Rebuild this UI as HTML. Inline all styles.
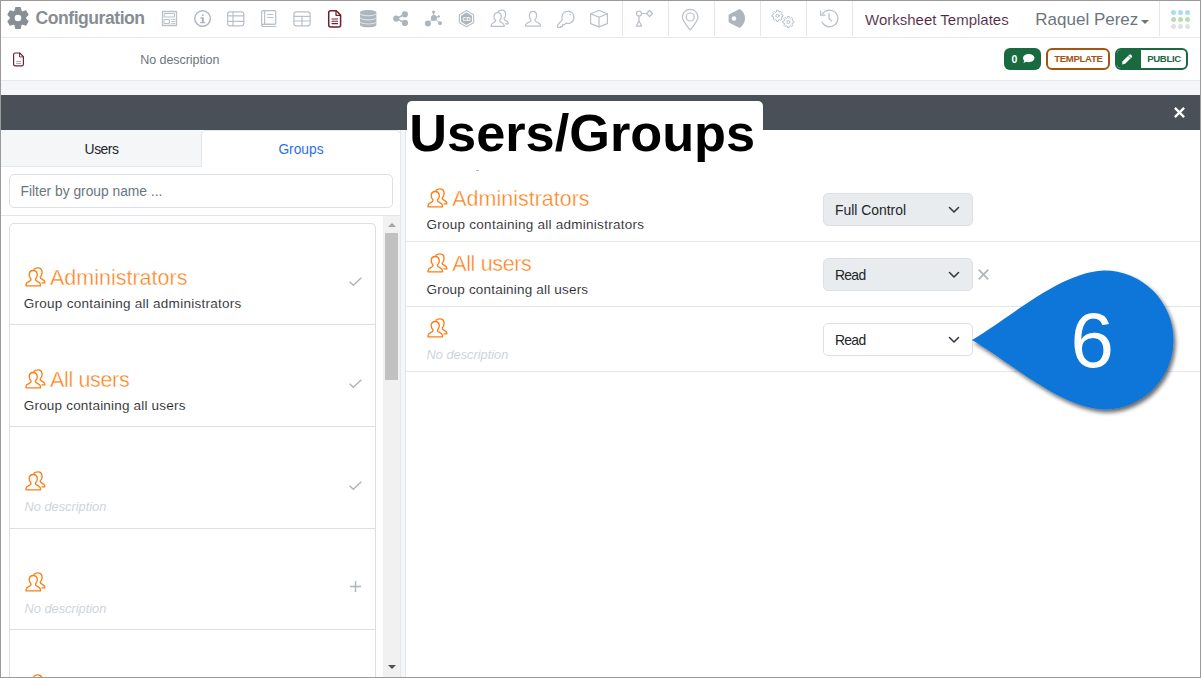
<!DOCTYPE html>
<html>
<head>
<meta charset="utf-8">
<title>Configuration</title>
<style>
*{box-sizing:border-box;margin:0;padding:0}
html,body{width:1201px;height:678px;overflow:hidden;background:#fff}
body{font-family:"Liberation Sans",sans-serif;color:#212529;position:relative}
.abs{position:absolute}
svg{position:absolute;overflow:visible}
#frame{position:absolute;left:0;top:0;width:1201px;height:678px;border:1px solid #9a9a9a;z-index:50;pointer-events:none}
/* top nav */
#nav{position:absolute;left:1px;top:1px;width:1199px;height:37px;background:#fff;border-bottom:1px solid #e6e9ec}
#nav .title{position:absolute;left:34.5px;top:5.6px;font-size:17.6px;font-weight:bold;color:#878d93;letter-spacing:-0.48px;line-height:22px;white-space:nowrap}
.sep{position:absolute;top:0;width:1px;height:35px;background:#e4e7ea}
#nav .ws{position:absolute;left:864px;top:10px;font-size:15px;color:#4d2540;-webkit-text-stroke:0.12px #fff;line-height:18px;white-space:nowrap}
#nav .user{position:absolute;left:1034.3px;top:9.3px;font-size:17px;color:#6c757d;line-height:20px;white-space:nowrap}
#nav .caret{position:absolute;left:1140px;top:19px;width:0;height:0;border-left:4px solid transparent;border-right:4px solid transparent;border-top:4px solid #6c757d}
.dot{position:absolute;width:5px;height:5px;border-radius:50%}
/* sub header */
#sub{position:absolute;left:1px;top:38px;width:1199px;height:43px;background:#fff;border-bottom:1px solid #e6e9ec}
#sub .nd{position:absolute;left:139.2px;top:13.7px;font-size:12.5px;color:#6c757d;line-height:16px;white-space:nowrap;letter-spacing:-0.05px}
#band{position:absolute;left:1px;top:81px;width:1199px;height:14px;background:#f5f6f8}
#bar{position:absolute;left:1px;top:95px;width:1199px;height:35px;background:#495057}
.badge{position:absolute;top:10px;height:22px;border-radius:6px;font-size:9.6px;font-weight:bold;line-height:18px;letter-spacing:-0.35px;white-space:nowrap}
/* left panel */
#gap{position:absolute;left:401px;top:130px;width:4px;height:547px;background:#f5f6f8}
#left{position:absolute;left:1px;top:130px;width:400px;height:547px;background:#fff;border-right:1px solid #e3e6ea}
#tabU{position:absolute;left:0;top:0;width:201px;height:37px;background:#f5f6f8;border-bottom:1px solid #e3e6ea;text-align:center;font-size:13.9px;line-height:38.6px;color:#212529;letter-spacing:-0.5px}
#tabG{position:absolute;left:200px;top:0;width:200px;height:37px;background:#fff;border:1px solid #e3e6ea;border-bottom:none;border-radius:5px 5px 0 0;text-align:center;font-size:13.8px;line-height:38px;color:#2e6fe8}
#filter{position:absolute;left:8px;top:44px;width:384px;height:34px;border:1px solid #dcdfe3;border-radius:5px;font-size:13.8px;color:#6c757d;line-height:34px;padding-left:10.5px;white-space:nowrap}
#hl{position:absolute;left:0;top:85px;width:399px;height:1px;background:#e3e6ea}
#list{position:absolute;left:8px;top:93px;width:367px;height:460px;border:1px solid #dcdfe3;border-radius:5px 5px 0 0;border-bottom:none}
.li{position:absolute;left:0;width:365px;height:102px;border-bottom:1px solid #dcdfe3}
.li .nm{position:absolute;left:40px;top:41.6px;font-size:21.5px;color:#fd7e14;-webkit-text-stroke:0.4px #fff;line-height:26px;white-space:nowrap}
.li .ds{position:absolute;left:13.8px;top:73px;font-size:13.5px;color:#212529;-webkit-text-stroke:0.1px #fff;line-height:16px;white-space:nowrap;letter-spacing:0.26px}
.li .nd{position:absolute;left:14.5px;top:72px;font-size:12.8px;color:#ced4da;font-style:italic;line-height:16px;white-space:nowrap}
#sb{position:absolute;left:382px;top:86px;width:17px;height:461px;background:#f1f1f1}
#sbt{position:absolute;left:384px;top:103px;width:13px;height:147px;background:#c1c1c1}
/* right panel */
#right{position:absolute;left:405px;top:130px;width:795px;height:547px;background:#fff;border-left:1px solid #e3e6ea}
.row{position:absolute;left:0;width:795px;height:65px;border-bottom:1px solid #e3e6ea}
.row .nm{position:absolute;left:46.2px;top:8.6px;font-size:21.5px;color:#fd7e14;-webkit-text-stroke:0.4px #fff;line-height:26px;white-space:nowrap}
.row .ds{position:absolute;left:20.5px;top:40px;font-size:13.5px;color:#212529;-webkit-text-stroke:0.1px #fff;line-height:16px;white-space:nowrap;letter-spacing:0.26px}
.row .nd{position:absolute;left:20.5px;top:40px;font-size:12.8px;color:#ced4da;font-style:italic;line-height:16px;white-space:nowrap}
.sel{position:absolute;left:417px;top:16px;width:150px;height:33px;border:1px solid #dde1e5;border-radius:5px;background:#e9ecef;font-size:13.9px;line-height:32px;padding-left:11px;color:#212529;white-space:nowrap}
.sel.w{background:#fff}
/* title overlay */
#ttl{position:absolute;left:407px;top:101px;width:356px;height:66px;background:#fff;border-radius:5px 5px 0 0;z-index:5}
#ttl span{position:absolute;left:2.3px;top:1.8px;font-size:52.3px;font-weight:bold;color:#000;line-height:60px;white-space:nowrap}
</style>
</head>
<body>
<svg width="0" height="0" style="position:absolute">
  <defs>
    <symbol id="grp" viewBox="0 0 21 21" overflow="visible">
      <g fill="none" stroke="currentColor" stroke-width="1.35" stroke-linejoin="round" stroke-linecap="round">
        <path d="M8.300 3.500c-2.500 0-4.100 1.900-4.100 4.300 0 1.700.7 3 1.700 4v1.100c0 1.500-4.900 1.900-4.900 4.800v1.100h14.500v-1.100c0-2.900-4.900-3.300-4.900-4.800v-1.100c1-1 1.700-2.300 1.700-4 0-2.400-1.500-4.300-4-4.300z"/>
        <path d="M8.900 2.300c.9-.9 2.400-1.500 3.900-1.500 2.700 0 4.300 2.100 4.300 4.700 0 1.700-.7 3.300-1.800 4.300v.9c0 1.200 4 1.800 4.400 4v1.200h-2.700"/>
      </g>
    </symbol>
    <symbol id="chev" viewBox="0 0 10 6" overflow="visible">
      <path d="M0.500 0.500 L5 5 L9.500 0.500" fill="none" stroke="#343a40" stroke-width="1.6" stroke-linecap="round" stroke-linejoin="round"/>
    </symbol>
    <symbol id="chk" viewBox="0 0 13 9" overflow="visible">
      <path d="M0.700 4.800 L4.300 8.200 L12.300 0.700" fill="none" stroke="#adb5bd" stroke-width="1.500"/>
    </symbol>
  </defs>
</svg>

<div id="nav">
  <!-- gear -->
  <svg style="left:5.700px;top:5.900px" width="22" height="22" viewBox="-11 -11 22 22">
    <g fill="#888e93"><circle r="8.300"/><path d="M-3.600 -7.500L-2.700 -10.700Q-2.600 -10.900 -2.300 -10.900H2.300Q2.600 -10.900 2.700 -10.700L3.600 -7.500Z" transform="rotate(0)"/><path d="M-3.600 -7.500L-2.700 -10.700Q-2.600 -10.900 -2.300 -10.900H2.300Q2.600 -10.900 2.700 -10.700L3.600 -7.500Z" transform="rotate(60)"/><path d="M-3.600 -7.500L-2.700 -10.700Q-2.600 -10.900 -2.300 -10.900H2.300Q2.600 -10.900 2.700 -10.700L3.600 -7.500Z" transform="rotate(120)"/><path d="M-3.600 -7.500L-2.700 -10.700Q-2.600 -10.900 -2.300 -10.900H2.300Q2.600 -10.900 2.700 -10.700L3.600 -7.500Z" transform="rotate(180)"/><path d="M-3.600 -7.500L-2.700 -10.700Q-2.600 -10.900 -2.300 -10.900H2.300Q2.600 -10.900 2.700 -10.700L3.600 -7.500Z" transform="rotate(240)"/><path d="M-3.600 -7.500L-2.700 -10.700Q-2.600 -10.900 -2.300 -10.900H2.300Q2.600 -10.900 2.700 -10.700L3.600 -7.500Z" transform="rotate(300)"/></g>
    <circle r="3.300" fill="#fff"/>
  </svg>
  <div class="title">Configuration</div>
  <svg style="left:-1px;top:-1px" width="1201" height="38" viewBox="0 0 1201 38">
  <g fill="none" stroke="#b9c0c8" stroke-width="1.200" stroke-linejoin="round" stroke-linecap="round">
    <!-- 1 newspaper -->
    <rect x="162.500" y="11.500" width="14" height="14" stroke-width="1.300"/>
    <rect x="164.500" y="13.500" width="10" height="3.500" stroke-width="1"/>
    <rect x="164.500" y="19.500" width="5" height="4" stroke-width="1"/>
    <path d="M171.500 19.500h3.500M171.500 21.500h3.500M171.500 23.500h3.500" stroke-width="0.900"/>
    <!-- 2 info -->
    <circle cx="202.600" cy="18.500" r="7.800" stroke-width="1.500" stroke="#b0b8c0"/>
    <!-- 3 table -->
    <rect x="227.600" y="11.800" width="16.200" height="14" rx="2.200"/>
    <path d="M233 11.800v14M227.600 15.900h16.200M227.600 21.400h16.200"/>
    <!-- 4 book -->
    <path d="M263.500 10.600h11.200q1 0 1 1v11.800q0 1 -1 1h-11.200"/>
    <path d="M265 10.600h-1.800q-1.600 0 -1.600 1.600v12.400q0 1.900 1.900 1.900h12.400"/>
    <path d="M264.600 10.600v13.800"/>
    <path d="M261.700 25q0 -0.700 1.700 -0.600h11"/>
    <path d="M267.500 14.500h5.500M267.500 17.500h5.500" stroke-width="1"/>
    <!-- 5 table2 -->
    <rect x="293.900" y="11.800" width="16.200" height="14" rx="2.200"/>
    <path d="M293.900 16.300h16.200M293.900 21h16.200M302 16.300v9.500"/>
    <!-- 11 users -->
    <!-- 12 user -->
    <path d="M533 11.300c-2.200 0-3.600 1.800-3.600 4.200 0 1.700.6 3.100 1.500 4v1.200c0 1.400-5.300 1.800-5.300 4.500v1h14.800v-1c0-2.700-5.300-3.100-5.300-4.500v-1.200c.9-.9 1.500-2.300 1.500-4 0-2.400-1.400-4.200-3.600-4.200z"/>
    <!-- 13 key -->
    <path d="M562.300 19.600a6.100 6.100 0 1 1 3.700 3.500l-1.800 1.800h-1.900v1.700h-1.900v.9h-2.800v-2.400z"/>
    <circle cx="570.300" cy="14.700" r="0.700" fill="#b9c0c8" stroke="none"/>
    <!-- 14 cube -->
    <path d="M599 10.500l8.400 3.300v9.800l-8.400 3.300-8.400-3.300v-9.800z"/>
    <path d="M590.600 13.800l8.400 3.400 8.400-3.400M599 17.200v9.700"/>
    <!-- 15 shapes -->
    <circle cx="639" cy="13.500" r="2.500"/>
    <path d="M641.500 13.500h5M646.500 13.500l3-3 3 3-3 3zM639 16v4.500M639 20.500l2.600 5.700h-5.200z"/>
    <!-- 16 pin -->
    <path d="M690.200 30c-3-4.200-7.800-9-7.800-12.800a7.800 7.800 0 0 1 15.600 0c0 3.800-4.800 8.600-7.800 12.800z"/>
    <circle cx="690.200" cy="17" r="4"/>
    <!-- 18 gears -->
    <g stroke-width="1"><path d="M776.50 11.62 L776.62 10.27 L778.38 10.27 L778.50 11.62 L779.75 12.13 L780.79 11.27 L782.03 12.51 L781.17 13.55 L781.68 14.80 L783.03 14.92 L783.03 16.68 L781.68 16.80 L781.17 18.05 L782.03 19.09 L780.79 20.33 L779.75 19.47 L778.50 19.98 L778.38 21.33 L776.62 21.33 L776.50 19.98 L775.25 19.47 L774.21 20.33 L772.97 19.09 L773.83 18.05 L773.32 16.80 L771.97 16.68 L771.97 14.92 L773.32 14.80 L773.83 13.55 L772.97 12.51 L774.21 11.27 L775.25 12.13Z"/><circle cx="777.5" cy="15.8" r="1.5"/><path d="M787.30 17.82 L787.42 16.47 L789.18 16.47 L789.30 17.82 L790.55 18.33 L791.59 17.47 L792.83 18.71 L791.97 19.75 L792.48 21.00 L793.83 21.12 L793.83 22.88 L792.48 23.00 L791.97 24.25 L792.83 25.29 L791.59 26.53 L790.55 25.67 L789.30 26.18 L789.18 27.53 L787.42 27.53 L787.30 26.18 L786.05 25.67 L785.01 26.53 L783.77 25.29 L784.63 24.25 L784.12 23.00 L782.77 22.88 L782.77 21.12 L784.12 21.00 L784.63 19.75 L783.77 18.71 L785.01 17.47 L786.05 18.33Z"/><circle cx="788.3" cy="22" r="1.5"/></g>
    <!-- 19 history -->
    <path d="M822.500 13.800a8.400 8.400 0 1 1 -.6 8.300"/>
    <path d="M820.600 10.800v4.400h4.400"/>
    <path d="M829 13.500v5l2.800 2.400"/>
    <!-- 10 hex -->
    <path d="M466.500 10.600l7.100 4.050v8.100l-7.100 4.050-7.100-4.050v-8.100z" stroke-width="1.200"/>
  </g>
  <svg x="490.200" y="9.400" width="19" height="19" style="color:#b9c0c8" overflow="visible"><use href="#grp"/></svg>
  <!-- info i -->
  <path d="M201.900 14.400h1.700v1.700h-1.700zM200.500 17.300h3.300v4.600h1.300v1.400h-5V21.900h1.700v-3.200h-1.300z" fill="#aab2bb"/>
  <!-- hex CD inner -->
  <path d="M466.500 13l4.900 2.850v5.700l-4.900 2.850-4.900-2.850v-5.700z" fill="#adb5bd" stroke="#adb5bd" stroke-width="1" stroke-linejoin="round"/>
  <text x="466.500" y="20.800" font-family="Liberation Sans, sans-serif" font-weight="bold" font-size="5.800" fill="#fff" text-anchor="middle" letter-spacing="-0.2">CD</text>
  <!-- 6 doc dark red -->
  <g fill="none" stroke="#6e1f2c" stroke-width="1.500" stroke-linejoin="round" stroke-linecap="round">
    <path d="M330.700 10.800h5.600l4.300 4.300v9.900q0 2-2 2h-7.900q-2 0-2-2v-12.200q0-2 2-2z"/>
    <path d="M336 11v4.300h4.300" stroke-width="1.200"/>
    <path d="M332 19h5.600M332 21.300h5.600M332 23.600h5.600" stroke-width="1.100"/>
  </g>
  <!-- 7 database -->
  <g>
    <path d="M360 12.600c0-3.500 16.400-3.500 16.400 0v12.100c0 3.500-16.400 3.500-16.400 0z" fill="#adb5bd"/>
    <path d="M360 13.600c1.200 2.900 15.200 2.900 16.400 0M360 17.700c1.200 2.900 15.200 2.900 16.400 0M360 21.800c1.200 2.900 15.200 2.900 16.400 0" fill="none" stroke="#fff" stroke-width="0.800" opacity="0.850"/>
  </g>
  <!-- 8 share -->
  <g fill="#adb5bd" stroke="#adb5bd">
    <circle cx="396.200" cy="18.600" r="3.100" stroke="none"/>
    <circle cx="404.900" cy="14.300" r="3.100" stroke="none"/>
    <circle cx="404.900" cy="22.900" r="3.100" stroke="none"/>
    <path d="M396.200 18.600L404.900 14.300M396.200 18.600L404.900 22.900" stroke-width="1.600" fill="none"/>
  </g>
  <!-- 9 nodes -->
  <g fill="#adb5bd" stroke="#adb5bd">
    <circle cx="433.900" cy="17.900" r="3" stroke="none"/>
    <circle cx="427.900" cy="23.500" r="3" stroke="none"/>
    <circle cx="440" cy="23.300" r="2" stroke="none"/>
    <circle cx="433.500" cy="11.900" r="1.500" stroke="none"/>
    <circle cx="438.700" cy="16.400" r="1.200" stroke="none"/>
    <path d="M427.900 23.500L433.900 17.900L440 23.300M433.900 17.900L433.500 11.900M433.900 17.900L438.700 16.400" stroke-width="1" fill="none"/>
  </g>
  <!-- 17 filled tag -->
  <path d="M740.400 9.600c6.200 4.200 6.200 13.600 0 17.800-.6.400-1.200.3-1.800 0l-8.700-4.300c-.9-.4-1.300-.9-1.300-1.900v-5.400c0-1 .4-1.500 1.300-1.900l8.700-4.300c.6-.3 1.200-.4 1.800 0z" fill="#adb5bd"/>
  <circle cx="734" cy="18.500" r="2.300" fill="#fff"/>
</svg>
  <div class="sep" style="left:621px"></div><div class="sep" style="left:667px"></div><div class="sep" style="left:713px"></div><div class="sep" style="left:759px"></div><div class="sep" style="left:805px"></div><div class="sep" style="left:851px"></div><div class="sep" style="left:1158px"></div>
  <div class="ws">Worksheet Templates</div>
  <div class="user">Raquel Perez</div>
  <div class="caret"></div>
  <div class="dot" style="left:1169.9px;top:9.1px;background:#a9ddf3"></div><div class="dot" style="left:1176.9px;top:9.1px;background:#a9ddf3"></div><div class="dot" style="left:1183.8px;top:9.1px;background:#a9ddf3"></div><div class="dot" style="left:1169.9px;top:15.9px;background:#b9deae"></div><div class="dot" style="left:1176.9px;top:15.9px;background:#b9deae"></div><div class="dot" style="left:1183.8px;top:15.9px;background:#b9deae"></div><div class="dot" style="left:1169.9px;top:22.6px;background:#dfe2e5"></div><div class="dot" style="left:1176.9px;top:22.6px;background:#dfe2e5"></div><div class="dot" style="left:1183.8px;top:22.6px;background:#dfe2e5"></div>
</div>
<div id="sub">
  <svg style="left:12px;top:13.500px" width="12" height="15" viewBox="0 0 12 15"><g fill="none" stroke="#6e1f2c" stroke-width="1.150" stroke-linejoin="round" stroke-linecap="round"><path d="M2.200 1h4.500l3.700 3.700v7.500q0 1.700-1.700 1.700h-6.500q-1.600 0-1.600-1.600v-9.700q0-1.600 1.600-1.600z"/><path d="M6.500 1.200v3.700h3.700" stroke-width="0.900"/><path d="M3.500 9.500h4.300M3.500 11.500h4.300" stroke-width="0.800" opacity="0.550"/></g></svg>
  <div class="nd">No description</div>
  <div class="badge" style="left:1003px;width:37px;background:#1a6a40;color:#fff"><span style="position:absolute;left:7.5px;top:2px;font-size:10.5px;letter-spacing:0">0</span>
    <svg style="left:18.500px;top:6px" width="11.500" height="9.500" viewBox="0 0 12 10"><path d="M6 0C2.700 0 0 1.900 0 4.300c0 1 .5 2 1.300 2.700-.2.900-.8 1.700-1.200 2.200 1.300 0 2.500-.5 3.300-1 .8.300 1.700.4 2.600.4 3.300 0 6-1.900 6-4.300S9.300 0 6 0z" fill="#fff"/></svg></div>
  <div class="badge" style="left:1045px;width:64px;border:2px solid #a3540f;color:#a3540f;background:#fff"><span style="position:absolute;left:6.300px;top:0px">TEMPLATE</span></div>
  <div class="badge" style="left:1114px;width:73px;border:2px solid #1a6a40;color:#1a6a40;background:#fff;overflow:hidden"><div style="position:absolute;left:-2px;top:-2px;width:26px;height:22px;background:#1a6a40"></div>
    <svg style="left:4.800px;top:3.800px" width="10.500" height="10.500" viewBox="0 0 11 11"><path d="M0 11l.7-3.300L7.600.8a1.300 1.300 0 0 1 1.800 0l.8.800a1.300 1.300 0 0 1 0 1.800L3.300 10.300z" fill="#fff"/><path d="M6.600 1.800l2.600 2.600" stroke="#1a6a40" stroke-width="0.700"/></svg>
    <span style="position:absolute;left:30.200px;top:0px">PUBLIC</span></div>
</div>
<div id="band"></div>
<div id="bar">
  <svg style="left:1173px;top:12.400px" width="11" height="11" viewBox="0 0 10 10"><path d="M0.800 0.800L9.200 9.200M9.200 0.800L0.800 9.200" stroke="#fff" stroke-width="2.100" fill="none"/></svg>
</div>
<div id="gap"></div>
<div id="left">
  <div id="tabU">Users</div>
  <div id="tabG">Groups</div>
  <div id="filter">Filter by group name ...</div>
  <div id="hl"></div>
  <div id="list">
    <div class="li" style="top:-1px">
      <svg style="left:15px;top:44px;color:#fd7e14" width="21" height="21"><use href="#grp"/></svg>
      <div class="nm">Administrators</div><div class="ds">Group containing all administrators</div>
      <svg style="left:339px;top:54px" width="13" height="9"><use href="#chk"/></svg>
    </div>
    <div class="li" style="top:101px">
      <svg style="left:15px;top:44px;color:#fd7e14" width="21" height="21"><use href="#grp"/></svg>
      <div class="nm" style="letter-spacing:-0.35px">All users</div><div class="ds" style="letter-spacing:0.19px">Group containing all users</div>
      <svg style="left:339px;top:54px" width="13" height="9"><use href="#chk"/></svg>
    </div>
    <div class="li" style="top:203px">
      <svg style="left:15px;top:44px;color:#fd7e14" width="21" height="21"><use href="#grp"/></svg>
      <div class="nd">No description</div>
      <svg style="left:339px;top:54px" width="13" height="9"><use href="#chk"/></svg>
    </div>
    <div class="li" style="top:304px;height:102px">
      <svg style="left:15px;top:44px;color:#fd7e14" width="21" height="21"><use href="#grp"/></svg>
      <div class="nd" style="top:73px">No description</div>
      <svg style="left:340px;top:53px" width="11" height="11" viewBox="0 0 11 11"><path d="M5.500 0V11M0 5.500H11" stroke="#adb5bd" stroke-width="1.400" fill="none"/></svg>
    </div>
    <div class="li" style="top:405.500px;border-bottom:none">
      <svg style="left:15px;top:44px;color:#fd7e14" width="21" height="21"><use href="#grp"/></svg>
    </div>
  </div>
  <div id="sb"></div><div id="sbt"></div>
  <svg style="left:387px;top:93px" width="8" height="4" viewBox="0 0 8 4"><path d="M0 4L4 0L8 4z" fill="#a3a3a3"/></svg>
  <svg style="left:387px;top:535px" width="8" height="4" viewBox="0 0 8 4"><path d="M0 0L4 4L8 0z" fill="#505050"/></svg>
</div>
<div id="right">
  <div class="row" style="top:47px">
    <svg style="left:21px;top:11px;color:#fd7e14" width="21" height="21"><use href="#grp"/></svg>
    <div class="nm">Administrators</div><div class="ds">Group containing all administrators</div>
    <div class="sel">Full Control<svg style="left:125px;top:13px" width="10" height="6"><use href="#chev"/></svg></div>
  </div>
  <div class="row" style="top:112px">
    <svg style="left:21px;top:11px;color:#fd7e14" width="21" height="21"><use href="#grp"/></svg>
    <div class="nm" style="letter-spacing:-0.35px">All users</div><div class="ds" style="letter-spacing:0.19px">Group containing all users</div>
    <div class="sel"><span style="letter-spacing:-0.7px">Read</span><svg style="left:125px;top:13px" width="10" height="6"><use href="#chev"/></svg></div>
    <svg style="left:572px;top:27px" width="11" height="11" viewBox="0 0 11 11"><path d="M0.700 0.700L10.300 10.300M10.300 0.700L0.700 10.300" stroke="#adb5bd" stroke-width="1.700" fill="none"/></svg>
  </div>
  <div class="row" style="top:177px">
    <svg style="left:21px;top:11px;color:#fd7e14" width="21" height="21"><use href="#grp"/></svg>
    <div class="nd">No description</div>
    <div class="sel w"><span style="letter-spacing:-0.7px">Read</span><svg style="left:125px;top:13px" width="10" height="6"><use href="#chev"/></svg></div>
  </div>
</div>
<div style="position:absolute;left:476px;top:170px;width:3px;height:1px;background:#b4b9c4;z-index:6"></div>
<div id="ttl"><span>Users/Groups</span></div>
<svg style="left:0;top:0;z-index:6" width="1201" height="678" viewBox="0 0 1201 678">
  <defs><filter id="ds" x="-20%" y="-20%" width="140%" height="140%"><feGaussianBlur in="SourceAlpha" stdDeviation="2.200"/><feOffset dx="1.500" dy="2.500"/><feComponentTransfer><feFuncA type="linear" slope="0.600"/></feComponentTransfer><feMerge><feMergeNode/><feMergeNode in="SourceGraphic"/></feMerge></filter></defs>
  <path filter="url(#ds)" fill="#0876d8" d="M972 340 C1010 318 1060 272 1104 270.500 A69.500 69.500 0 1 1 1104 409.500 C1060 408 1010 362 972 340 Z"/>
  <text x="1092.300" y="367.300" text-anchor="middle" font-family="Liberation Sans, sans-serif" font-size="78" fill="#fff">6</text>
</svg>
<div id="frame"></div>
</body>
</html>
